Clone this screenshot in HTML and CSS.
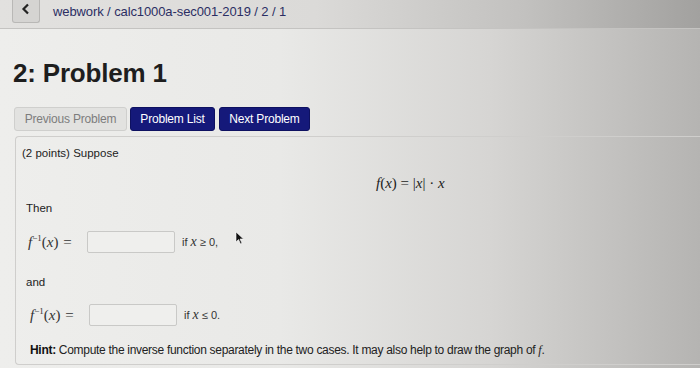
FILE: index.html
```html
<!DOCTYPE html>
<html>
<head>
<meta charset="utf-8">
<link rel="stylesheet" href="styles.css">
</head>
<body>
<div class="page">
  <div class="topbar">
    <div class="back"><svg width="10" height="12" viewBox="0 0 10 12"><path d="M7 1.5 L2.5 6 L7 10.5" fill="none" stroke="#222" stroke-width="2.2"/></svg></div>
    <div class="crumb">webwork / calc1000a-sec001-2019 / 2 / 1</div>
  </div>
  <div class="main">
    <h1 class="title">2: Problem 1</h1>
    <div class="buttons">
      <span class="btn btn-disabled">Previous Problem</span>
      <span class="btn btn-primary btn-list">Problem List</span>
      <span class="btn btn-primary btn-next">Next Problem</span>
    </div>
    <div class="panel">
      <div class="p-intro">(2 points) Suppose</div>
      <div class="display-math"><span class="mi">f</span>(<span class="mi">x</span>) = |<span class="mi">x</span>| · <span class="mi">x</span></div>
      <div class="p-then">Then</div>
      <div class="answer-row">
        <span class="mathlabel"><span class="mi">f</span><sup>−1</sup>(<span class="mi">x</span>) =</span>
        <span class="ans-box"></span>
        <span class="cond">if <span class="mi">x</span> ≥ 0,</span>
        <svg class="cursor" width="9" height="13" viewBox="0 0 9 13"><path d="M1 0 L1 10 L3.5 7.5 L5.5 12 L7 11.3 L5 7 L8.5 7 Z" fill="#111" stroke="#fff" stroke-width="0.6"/></svg>
      </div>
      <div class="p-and">and</div>
      <div class="answer-row row2">
        <span class="mathlabel"><span class="mi">f</span><sup>−1</sup>(<span class="mi">x</span>) =</span>
        <span class="ans-box"></span>
        <span class="cond">if <span class="mi">x</span> ≤ 0.</span>
      </div>
      <div class="hint"><b>Hint:</b> Compute the inverse function separately in the two cases. It may also help to draw the graph of <span class="mi">f</span>.</div>
    </div>
  </div>
</div>
</body>
</html>
```

FILE: styles.css
```css
html, body {
  margin: 0;
  padding: 0;
}
body {
  width: 700px;
  height: 368px;
  overflow: hidden;
  font-family: "Liberation Sans", Arial, sans-serif;
  color: #222;
  background: linear-gradient(to right, #eeeeec 0%, #e9e9e7 40%, #d6d5d3 70%, #b5b4b2 100%);
}
.page {
  position: relative;
  height: 368px;
}
.topbar {
  height: 29px;
  box-sizing: border-box;
  border-bottom: 1px solid #c4c3c1;
  display: flex;
  align-items: flex-start;
  padding-left: 12px;
  background: linear-gradient(to right, #e2e1df 0%, #dbdad8 45%, #c2c1bf 75%, #a2a19f 100%);
}
.back {
  width: 28px;
  height: 23px;
  box-sizing: border-box;
  border: 1px solid #b9b8b6;
  border-top: none;
  border-radius: 0 0 3px 3px;
  background: #d5d4d2;
  display: flex;
  align-items: center;
  justify-content: center;
}
.back svg {
  margin-top: -4px;
}
.crumb {
  margin-left: 13px;
  margin-top: 4px;
  font-size: 13px;
  color: #2b2e63;
  letter-spacing: -0.1px;
}
.main {
  padding-left: 13px;
}
.title {
  margin: 29px 0 0 0;
  font-size: 26px;
  line-height: 30px;
  font-weight: bold;
  color: #1e1e1e;
  letter-spacing: -0.2px;
}
.buttons {
  display: flex;
  gap: 4px;
  margin-top: 19px;
  padding-left: 1px;
}
.btn {
  height: 24px;
  box-sizing: border-box;
  border-radius: 3px;
  font-size: 12px;
  display: flex;
  align-items: center;
  justify-content: center;
  letter-spacing: -0.2px;
}
.btn-disabled {
  width: 113px;
  background: #e2e2e0;
  border: 1px solid #cfcfcd;
  color: #7d7d7d;
}
.btn-primary {
  background: #15197a;
  border: 1px solid #0e1160;
  color: #fff;
}
.btn-list {
  width: 85px;
  margin-left: -1px;
}
.btn-next {
  width: 91px;
}
.panel {
  margin-top: 5px;
  margin-left: 2px;
  width: 685px;
  height: 229px;
  box-sizing: border-box;
  border: 1px solid #cfcecc;
  border-right: none;
  border-radius: 4px 0 0 4px;
  padding: 9px 0 0 6px;
  font-size: 11.5px;
  position: relative;
}
.mi {
  font-family: "Liberation Serif", "Times New Roman", serif;
  font-style: italic;
}
.p-intro {
  line-height: 14px;
}
.display-math {
  margin-top: 15px;
  padding-left: 354px;
  font-family: "Liberation Serif", "Times New Roman", serif;
  font-size: 15px;
  line-height: 17px;
  color: #222;
}
.p-then {
  margin-top: 9px;
  padding-left: 4px;
  line-height: 14px;
}
.answer-row {
  display: flex;
  align-items: center;
  margin-top: 16px;
  padding-left: 6px;
  height: 22px;
}
.mathlabel {
  font-family: "Liberation Serif", "Times New Roman", serif;
  font-size: 15px;
  width: 59px;
  color: #333;
  white-space: nowrap;
  word-spacing: 1px;
}
.mathlabel sup {
  font-size: 9px;
}
.ans-box {
  width: 88px;
  height: 22px;
  box-sizing: border-box;
  border: 1px solid #c9c9c7;
  border-radius: 2px;
  background: #efefed;
}
.cond {
  margin-left: 7px;
  font-size: 11px;
  color: #333;
  font-family: "Liberation Sans", Arial, sans-serif;
}
.cond .mi {
  font-size: 14px;
}
.cursor {
  margin-left: 17px;
  margin-top: -7px;
}
.p-and {
  margin-top: 22px;
  padding-left: 4px;
  line-height: 14px;
}
.row2 {
  margin-top: 15px;
  padding-left: 8px;
}
.hint {
  margin-top: 17px;
  padding-left: 8px;
  font-size: 12px;
  letter-spacing: -0.3px;
  color: #222;
}
.hint b {
  color: #111;
}
```
